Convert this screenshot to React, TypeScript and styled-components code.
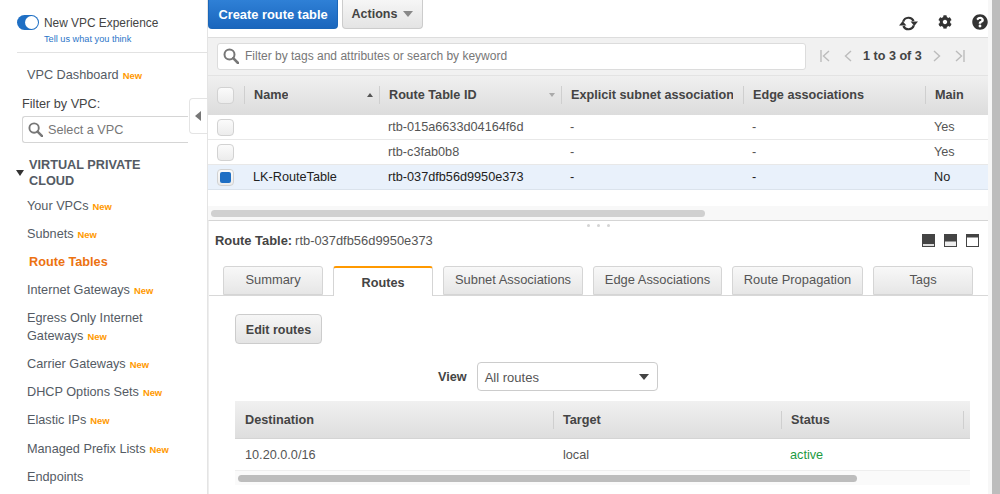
import React from "react";
import styled, { createGlobalStyle } from "styled-components";
import { FaCog, FaQuestionCircle } from "react-icons/fa";

const Global = createGlobalStyle`
  html, body { margin: 0; padding: 0; height: 494px; overflow: hidden; background: #fff; }
  * { box-sizing: border-box; }
  body { font-family: "Liberation Sans", Arial, sans-serif; font-size: 12.7px; color: #444; }
`;

const Page = styled.div`display: flex; width: 1000px; height: 494px; overflow: hidden;`;

/* ---- sidebar ---- */
const Sidebar = styled.aside`
  position: relative; flex: 0 0 208px; height: 494px; border-right: 1px solid #e4e4e4;
  padding: 0 0 0 17px; overflow: hidden;
`;
const ExperienceBox = styled.div`
  height: 53px; padding-top: 15px; border-bottom: 1px solid #e2e2e2; margin-right: -1px;
`;
const ToggleRow = styled.div`display: flex; align-items: center; gap: 5px; height: 15px;`;
const Toggle = styled.span`
  width: 22px; height: 15px; border-radius: 8px; background: #1f6fc4; display: flex; justify-content: flex-end; align-items: center; padding-right: 1px;
  &::after { content: ""; width: 13px; height: 13px; border-radius: 50%; background: #fff; }
`;
const ExperienceLabel = styled.span`font-size: 11.9px; color: #444;`;
const Feedback = styled.a`display: block; margin: 3px 0 0 27px; font-size: 9.2px; line-height: 12px; color: #2b75c8;`;
const NavItem = styled.div<{ $top: number; $active?: boolean }>`
  margin-top: ${(p) => p.$top}px; padding-left: ${(p) => (p.$active ? 12 : 10)}px; padding-right: 22px;
  font-size: 12.7px; line-height: 18px; color: ${(p) => (p.$active ? "#ec7211" : "#545b64")};
  font-weight: ${(p) => (p.$active ? 700 : 400)};
`;
const New = styled.span`margin-left: 4px; font-size: 9.4px; line-height: 1; font-weight: 700; color: #f90;`;
const FilterLabel = styled.div`margin: 11px 0 0 5px; font-size: 12.7px; line-height: 18px; color: #444;`;
const VpcInput = styled.div`
  display: flex; align-items: center; gap: 5px; margin: 3px 0 0 5px; width: 166px; height: 27px; padding-left: 5px;
  border: 1px solid #d5d5d5; border-right: 0; border-radius: 3px 0 0 3px; font-size: 12.7px; color: #777;
`;
const SectionHead = styled.div`
  display: flex; align-items: center; gap: 5px; margin: 14px 0 0 -1px;
  font-size: 12.7px; font-weight: 700; line-height: 16px; color: #545b64; width: 135px;
`;
const Caret = styled.span`
  flex: 0 0 auto; width: 0; height: 0; border: 4px solid transparent; border-top: 6px solid #333; border-bottom: 0;
`;
const Collapse = styled.div`
  position: absolute; left: 189px; top: 98px; width: 20px; height: 36px; background: #fff;
  border: 1px solid #e4e4e4; border-right: 0; border-radius: 4px 0 0 4px; display: flex; align-items: center; justify-content: center; padding-right: 3px;
  &::before { content: ""; border: 5px solid transparent; border-right: 6px solid #777; border-left: 0; }
`;

/* ---- main ---- */
const Main = styled.main`flex: 0 0 780px; height: 494px; display: flex; flex-direction: column; overflow: hidden;`;
const Toolbar = styled.div`display: flex; align-items: flex-start; height: 37px; gap: 4px;`;
const PrimaryButton = styled.button`
  width: 130px; height: 29px; border: 1px solid #1b66b8; border-top: 0; border-radius: 0 0 4px 4px;
  background: linear-gradient(#2f80d6, #1a66bd); color: #fff; font: 700 12.85px "Liberation Sans", sans-serif; padding: 0;
`;
const GrayButton = styled.button<{ $w: number }>`
  display: flex; align-items: center; justify-content: center; gap: 6px;
  width: ${(p) => p.$w}px; height: 30px; border: 1px solid #ccc; border-radius: 4px;
  background: linear-gradient(#f6f6f6, #e4e4e4); color: #444; font: 700 12.5px "Liberation Sans", sans-serif; padding: 0;
`;
const ActionsButton = styled(GrayButton)`border-top: 0; border-radius: 0 0 4px 4px; height: 29px; margin-left: 0;`;
const Chevron = styled.span`
  width: 0; height: 0; border: 5px solid transparent; border-top: 6px solid #888; border-bottom: 0;
`;
const ToolIcons = styled.div`margin-left: auto; display: flex; align-items: center; gap: 20px; height: 16px; margin-top: 14px; color: #333; line-height: 0;`;
const RefreshIcon = styled.svg`width: 19px; height: 15px; margin-top: 2px; margin-right: 0; fill: #333;`;
const FilterBar = styled.div`
  display: flex; align-items: center; height: 38px; background: #f1f1f1; border-top: 1px solid #ddd; padding: 0 0 1px 9px;
`;
const Search = styled.div`
  display: flex; align-items: center; gap: 6px; width: 589px; height: 27px; background: #fff; border: 1px solid #dcdcdc; border-radius: 3px;
  padding-left: 5px; font-size: 12px; color: #777;
`;
const Pager = styled.div`display: flex; align-items: center; margin-left: 13px; color: #444; font-size: 12.6px; font-weight: 700; line-height: 0;`;
const PagerCount = styled.span`margin: 0 9px 0 9px; line-height: 16px;`;
const PagerIcon = styled.svg<{ $gap?: number }>`
  width: 12px; height: 14px; fill: none; stroke: #bcbcbc; stroke-width: 1.4; margin-right: ${(p) => p.$gap ?? 0}px;
`;
const HeadRow = styled.div`
  display: grid; grid-template-columns: 36px 135px 182px 182px 182px 63px; height: 40px; align-items: center; padding-bottom: 1px;
  background: linear-gradient(#f0f0f0, #dcdcdc); border-top: 1px solid #e3e3e3;
`;
const HeadCell = styled.div`
  display: flex; align-items: center; justify-content: space-between; height: 18px; padding: 0 5px 0 9px; border-left: 1px solid #cfcfcf;
  font-weight: 700; font-size: 12.65px; color: #444; white-space: nowrap; overflow: hidden;
`;
const HeadLabel = styled.span`display: block; max-width: 162px; overflow: hidden;`;
const BoxCell = styled.div`display: flex; justify-content: center; padding-right: 1px;`;
const Check = styled.span<{ $on?: boolean }>`
  display: flex; align-items: center; justify-content: center; width: 17px; height: 17px; border: 1px solid #d2d2d2; border-radius: 4px;
  background: linear-gradient(#fbfbfb, #ececec);
  ${(p) => p.$on && `&::after { content: ""; width: 11px; height: 11px; border-radius: 2px; background: #1f6fc4; }`}
`;
const SortArrow = styled.span<{ $down?: boolean }>`
  width: 0; height: 0; border: 3.5px solid transparent; margin-right: 1px;
  ${(p) => (p.$down ? "border-top: 4px solid #aaa; border-bottom: 0;" : "border-bottom: 4px solid #555; border-top: 0;")}
`;
const Row = styled.div<{ $sel?: boolean }>`
  display: grid; grid-template-columns: 36px 135px 182px 182px 182px 63px; height: 25px; align-items: center;
  border-bottom: 1px solid ${(p) => (p.$sel ? "#dbe3ec" : "#e8e8e8")};
  background: ${(p) => (p.$sel ? "#e9f1fb" : "#fff")}; color: ${(p) => (p.$sel ? "#222" : "#555")};
`;
const Cell = styled.div`padding-left: 9px; font-size: 12.7px; white-space: nowrap;`;
const Track = styled.div<{ $h: number; $bg: string; $top: number }>`
  height: ${(p) => p.$h}px; background: ${(p) => p.$bg}; margin-top: ${(p) => p.$top}px; padding-top: 4px; flex: 0 0 auto;
`;
const Thumb = styled.div<{ $w: number; $c: string; $l: number }>`
  width: ${(p) => p.$w}px; height: 7px; margin-left: ${(p) => p.$l}px; border-radius: 4px; background: ${(p) => p.$c};
`;
const Detail = styled.section`flex: 1; border-top: 1px solid #d5d5d5; border-left: 1px solid #eee; min-height: 0;`;
const Grip = styled.div`display: flex; justify-content: center; gap: 7px; height: 8px; padding: 3px 0 0;`;
const GripDot = styled.span`width: 3px; height: 3px; border-radius: 50%; background: #d4d4d4;`;
const DetailHead = styled.div`display: flex; align-items: center; justify-content: space-between; height: 20px; margin-top: 1px; padding: 0 9px 0 6px; font-size: 12.9px; color: #555;`;
const DetailTitle = styled.b`color: #444; margin-right: 3px;`;
const PaneIcons = styled.div`display: flex; gap: 9px; align-items: center;`;
const PaneIcon = styled.svg`width: 13px; height: 13px;`;
const Tabs = styled.div`display: flex; gap: 10px; height: 30px; margin-top: 16px; padding-left: 14px; border-bottom: 1px solid #d8d8d8;`;
const Tab = styled.div<{ $w: number; $active?: boolean }>`
  width: ${(p) => p.$w}px; height: ${(p) => (p.$active ? 30 : 29)}px; display: flex; align-items: center; justify-content: center; padding-bottom: 2px;
  border: 1px solid #d5d5d5; border-bottom: ${(p) => (p.$active ? "0" : "1px solid #d5d5d5")}; border-radius: 3px 3px 0 0; font-size: 12.9px;
  background: ${(p) => (p.$active ? "#fff" : "linear-gradient(#f8f8f8,#e6e6e6)")}; color: #555;
  ${(p) => p.$active && "border-top: 2px solid #f90; font-weight: 700; color: #444; padding-top: 1px; padding-bottom: 0; font-size: 12.7px;"}
`;
const Body = styled.div`padding: 18px 18px 0 26px;`;
const EditButton = styled(GrayButton)`height: 30px; padding-top: 1px;`;
const ViewRow = styled.div`display: flex; align-items: center; gap: 10px; margin: 18px 0 0 203px; font-weight: 700; font-size: 12.7px;`;
const Select = styled.div`
  display: flex; align-items: center; justify-content: space-between; width: 181px; height: 29px; padding: 1px 8px 0 7px;
  border: 1px solid #ccc; border-radius: 4px; font-weight: 400; color: #555; font-size: 13px;
`;
const SelectCaret = styled.span`width: 0; height: 0; border: 5px solid transparent; border-top: 6px solid #444; border-bottom: 0;`;
const RouteHead = styled.div`
  display: grid; grid-template-columns: 318px 228px 182px 7px; align-items: center; height: 38px; margin-top: 10px; width: 735px; padding-top: 1px;
  background: linear-gradient(#f0f0f0, #dedede); border-bottom: 1px solid #d4d4d4;
`;
const RouteFirst = styled.div`padding-left: 10px; font-weight: 700; color: #444;`;
const RouteHeadCell = styled.div`height: 18px; padding-left: 9px; border-left: 1px solid #cfcfcf; font-weight: 700; color: #444; line-height: 18px;`;
const RouteRow = styled.div`
  display: grid; grid-template-columns: 318px 227px 190px; align-items: center; height: 32px; width: 735px; padding-top: 1px;
  border-bottom: 1px solid #eee; color: #555;
`;
const RouteCell = styled.div<{ $ok?: boolean }>`padding-left: 10px; color: ${(p) => (p.$ok ? "#1d9a3f" : "#555")};`;
const Scroll = styled.div`
  flex: 0 0 12px; background: #f7f7f7; display: flex; justify-content: flex-end;
  &::after { content: ""; width: 8px; height: 494px; background: #bdbdbd; }
`;

const Magnifier = ({ size }: { size: number }) => (
  <svg width={size} height={size} viewBox="0 0 16 16" fill="none" stroke="#777" strokeWidth="2">
    <circle cx="6.5" cy="6.5" r="5" />
    <path d="M10.2 10.2 15 15" strokeWidth="2.6" strokeLinecap="round" />
  </svg>
);

const navTop = [
  ["Your VPCs", 8],
  ["Subnets", 10],
] as const;

export default function App() {
  return (
    <Page>
      <Global />
      <Sidebar>
        <ExperienceBox>
          <ToggleRow>
            <Toggle />
            <ExperienceLabel>New VPC Experience</ExperienceLabel>
          </ToggleRow>
          <Feedback>Tell us what you think</Feedback>
        </ExperienceBox>
        <NavItem $top={13}>VPC Dashboard<New>New</New></NavItem>
        <FilterLabel>Filter by VPC:</FilterLabel>
        <VpcInput><Magnifier size={15} />Select a VPC</VpcInput>
        <SectionHead><Caret /><span>VIRTUAL PRIVATE CLOUD</span></SectionHead>
        {navTop.map(([t, m]) => (
          <NavItem key={t} $top={m}>{t}<New>New</New></NavItem>
        ))}
        <NavItem $top={10} $active>Route Tables</NavItem>
        <NavItem $top={10}>Internet Gateways<New>New</New></NavItem>
        <NavItem $top={10}>Egress Only Internet Gateways<New>New</New></NavItem>
        <NavItem $top={10}>Carrier Gateways<New>New</New></NavItem>
        <NavItem $top={10}>DHCP Options Sets<New>New</New></NavItem>
        <NavItem $top={10}>Elastic IPs<New>New</New></NavItem>
        <NavItem $top={11}>Managed Prefix Lists<New>New</New></NavItem>
        <NavItem $top={10}>Endpoints</NavItem>
        <Collapse />
      </Sidebar>
      <Main>
        <Toolbar>
          <PrimaryButton>Create route table</PrimaryButton>
          <ActionsButton $w={81}>Actions<Chevron /></ActionsButton>
          <ToolIcons>
            <RefreshIcon viewBox="0 0 19 15">
              <path d="M4.2 5.6A5.6 5.6 0 0 1 14.6 5" fill="none" stroke="#333" strokeWidth="2.2" />
              <path d="M11.6 5.6H19l-3.7 4.4z" />
              <path d="M14.8 9.4A5.6 5.6 0 0 1 4.4 10" fill="none" stroke="#333" strokeWidth="2.2" />
              <path d="M7.4 9.4H0l3.7-4.4z" />
            </RefreshIcon>
            <FaCog size={14} />
            <FaQuestionCircle size={16} />
          </ToolIcons>
        </Toolbar>
        <FilterBar>
          <Search><Magnifier size={16} />Filter by tags and attributes or search by keyword</Search>
          <Pager>
            <PagerIcon viewBox="0 0 12 14" $gap={11}><path d="M2 1v12M10 2 4.5 7l5.5 5" /></PagerIcon>
            <PagerIcon viewBox="0 0 12 14"><path d="M9 2 3.5 7 9 12" /></PagerIcon>
            <PagerCount>1 to 3 of 3</PagerCount>
            <PagerIcon viewBox="0 0 12 14" $gap={11}><path d="M3 2l5.5 5L3 12" /></PagerIcon>
            <PagerIcon viewBox="0 0 12 14"><path d="M2 2l5.5 5L2 12M10 1v12" /></PagerIcon>
          </Pager>
        </FilterBar>
        <HeadRow>
          <BoxCell><Check /></BoxCell>
          <HeadCell><HeadLabel>Name</HeadLabel><SortArrow /></HeadCell>
          <HeadCell><HeadLabel>Route Table ID</HeadLabel><SortArrow $down /></HeadCell>
          <HeadCell><HeadLabel>Explicit subnet association</HeadLabel></HeadCell>
          <HeadCell><HeadLabel>Edge associations</HeadLabel></HeadCell>
          <HeadCell><HeadLabel>Main</HeadLabel></HeadCell>
        </HeadRow>
        <Row>
          <BoxCell><Check /></BoxCell><Cell /><Cell>rtb-015a6633d04164f6d</Cell><Cell>-</Cell><Cell>-</Cell><Cell>Yes</Cell>
        </Row>
        <Row>
          <BoxCell><Check /></BoxCell><Cell /><Cell>rtb-c3fab0b8</Cell><Cell>-</Cell><Cell>-</Cell><Cell>Yes</Cell>
        </Row>
        <Row $sel>
          <BoxCell><Check $on /></BoxCell><Cell>LK-RouteTable</Cell><Cell>rtb-037dfb56d9950e373</Cell><Cell>-</Cell><Cell>-</Cell><Cell>No</Cell>
        </Row>
        <Track $h={14} $bg="#f8f8f8" $top={16}><Thumb $w={494} $l={3} $c="#d0d0d0" /></Track>
        <Detail>
          <Grip><GripDot /><GripDot /><GripDot /></Grip>
          <DetailHead>
            <span><DetailTitle>Route Table:</DetailTitle>rtb-037dfb56d9950e373</span>
            <PaneIcons>
              <PaneIcon viewBox="0 0 13 13"><rect width="13" height="13" fill="#444" /><rect x="1" y="10" width="11" height="2" fill="#ddd" /></PaneIcon>
              <PaneIcon viewBox="0 0 13 13"><rect width="13" height="13" fill="#444" /><rect x="1" y="7.5" width="11" height="4.5" fill="#eee" /></PaneIcon>
              <PaneIcon viewBox="0 0 13 13"><rect width="13" height="13" fill="#444" /><rect x="1" y="3.5" width="11" height="8.5" fill="#fff" /></PaneIcon>
            </PaneIcons>
          </DetailHead>
          <Tabs>
            <Tab $w={100}>Summary</Tab>
            <Tab $w={100} $active>Routes</Tab>
            <Tab $w={140}>Subnet Associations</Tab>
            <Tab $w={129}>Edge Associations</Tab>
            <Tab $w={131}>Route Propagation</Tab>
            <Tab $w={100}>Tags</Tab>
          </Tabs>
          <Body>
            <EditButton $w={87}>Edit routes</EditButton>
            <ViewRow>View<Select>All routes<SelectCaret /></Select></ViewRow>
            <RouteHead>
              <RouteFirst>Destination</RouteFirst>
              <RouteHeadCell>Target</RouteHeadCell>
              <RouteHeadCell>Status</RouteHeadCell>
              <RouteHeadCell />
            </RouteHead>
            <RouteRow>
              <RouteCell>10.20.0.0/16</RouteCell>
              <RouteCell>local</RouteCell>
              <RouteCell $ok>active</RouteCell>
            </RouteRow>
            <Track $h={14} $bg="#fafafa" $top={0}><Thumb $w={619} $l={3} $c="#bdbdbd" /></Track>
          </Body>
        </Detail>
      </Main>
      <Scroll />
    </Page>
  );
}
